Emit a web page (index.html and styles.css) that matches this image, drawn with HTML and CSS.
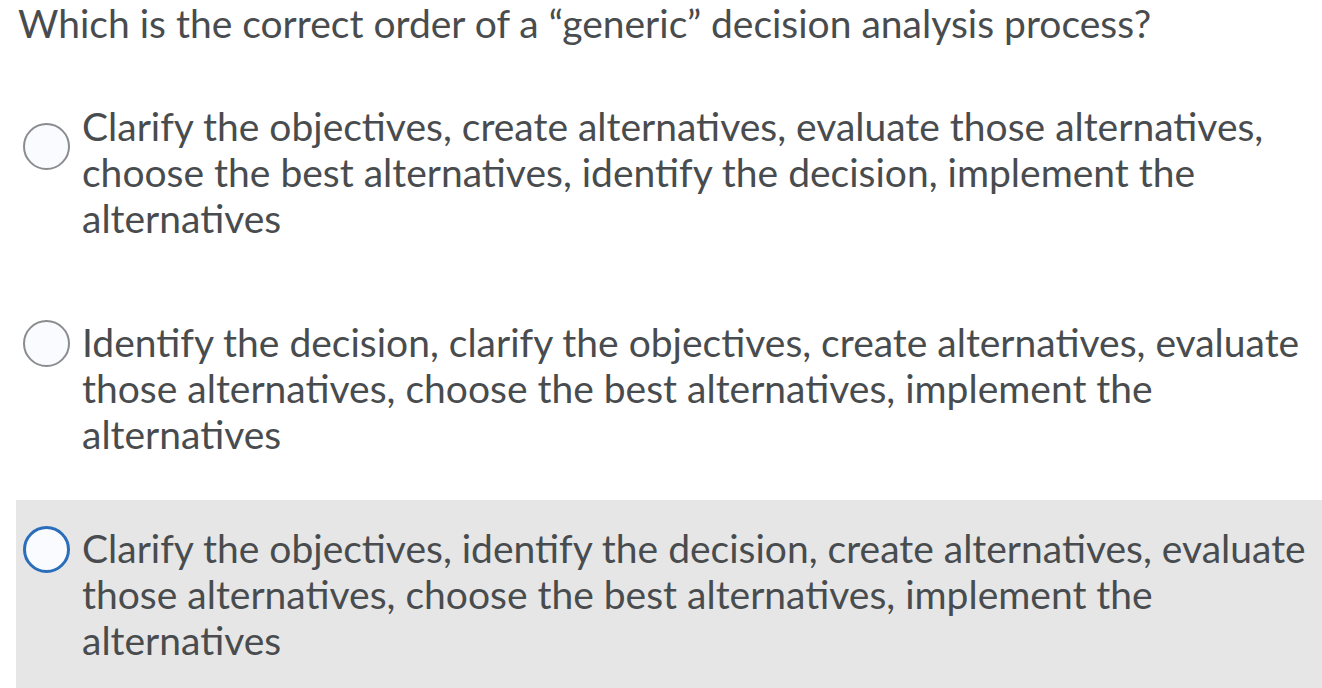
FILE: index.html
```html
<!DOCTYPE html>
<html>
<head>
<meta charset="utf-8">
<link rel="stylesheet" href="styles.css">
</head>
<body>
<div class="page">
  <h1 class="question">Which is the correct order of a “generic” decision analysis process?</h1>
  <div class="options">
    <label class="option opt-1">
      <span class="radio radio-low"></span>
      <span class="text">Clarify the objectives, create alternatives, evaluate those alternatives, choose the best alternatives, identify the decision, implement the alternatives</span>
    </label>
    <label class="option opt-2">
      <span class="radio"></span>
      <span class="text">Identify the decision, clarify the objectives, create alternatives, evaluate those alternatives, choose the best alternatives, implement the alternatives</span>
    </label>
    <label class="option opt-3 hover">
      <span class="radio focus"></span>
      <span class="text">Clarify the objectives, identify the decision, create alternatives, evaluate those alternatives, choose the best alternatives, implement the alternatives</span>
    </label>
  </div>
</div>
</body>
</html>
```

FILE: styles.css
```css
html, body {
  margin: 0;
  padding: 0;
  background: #ffffff;
}
body {
  font-family: "Lato", "Open Sans", sans-serif;
  color: #494c4e;
  width: 1322px;
  height: 688px;
  overflow: hidden;
}
.page {
  padding-top: 0;
}
.question {
  margin: 0;
  padding-left: 18px;
  font-size: 39px;
  font-weight: 400;
  line-height: 46px;
}
.options {
  display: flex;
  flex-direction: column;
  margin-left: 16px;
}
.option {
  display: flex;
  align-items: flex-start;
  gap: 12px;
  padding-left: 7px;
  font-size: 39px;
  line-height: 46px;
}
.opt-1 {
  margin-top: 57px;
}
.opt-2 {
  margin-top: 78px;
}
.opt-3 {
  margin-top: 43px;
  padding-top: 25px;
  padding-bottom: 40px;
}
.opt-1 .radio-low {
  margin-top: 20px;
}
.opt-2 .radio,
.opt-3 .radio {
  margin-top: 1px;
}
.hover {
  background: #e6e6e6;
}
.text {
  flex: 1;
  padding-right: 6px;
}
.radio {
  flex: none;
  box-sizing: border-box;
  width: 47px;
  height: 47px;
  border-radius: 50%;
  border: 2px solid #8a8c8f;
  background: #f9fbff;
}
.radio.focus {
  border: 3.5px solid #2a6ebb;
}
```
